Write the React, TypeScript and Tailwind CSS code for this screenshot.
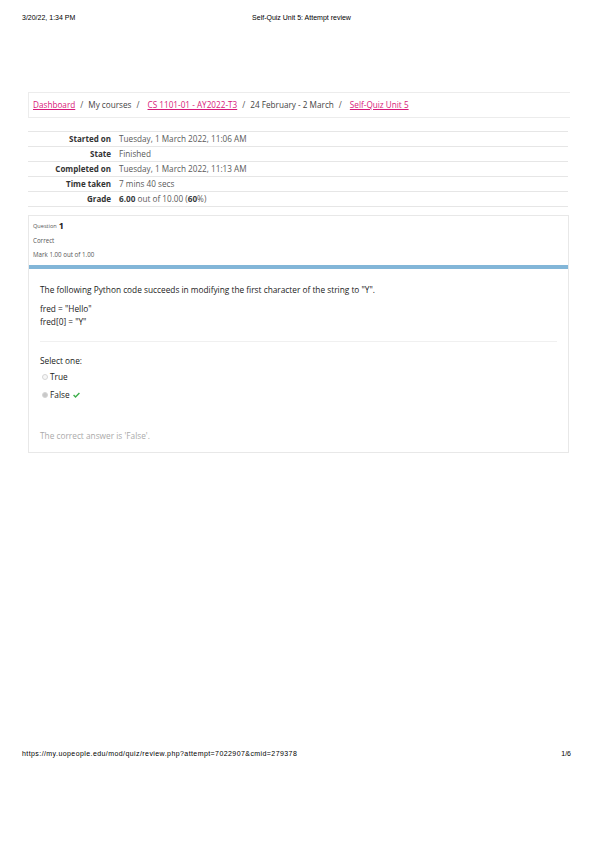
const linkClass = 'text-[#d8197a] underline underline-offset-1';

const summary: [string, React.ReactNode][] = [
  ['Started on', 'Tuesday, 1 March 2022, 11:06 AM'],
  ['State', 'Finished'],
  ['Completed on', 'Tuesday, 1 March 2022, 11:13 AM'],
  ['Time taken', '7 mins 40 secs'],
  [
    'Grade',
    <>
      <b className="font-bold text-[#373a3c]">6.00</b> out of 10.00 (<b className="font-bold text-[#373a3c]">60</b>%)
    </>,
  ],
];

function Sep() {
  return <span className="mx-[5px] text-[#555]">/</span>;
}

function Radio({ checked }: { checked?: boolean }) {
  return (
    <span
      className={`mr-[2px] inline-block h-[6px] w-[6px] rounded-full border border-[#d5d5d5] ${
        checked ? 'bg-[#c8c8c8]' : 'bg-[#f7f7f7]'
      }`}
    />
  );
}

export default function App() {
  return (
    <div className="flex h-[842px] w-[595px] flex-col bg-white font-['Open_Sans',sans-serif] text-[#373a3c]">
      <header className="grid h-[37px] grid-cols-[1fr_auto_1fr] items-center px-[22px] font-['Liberation_Sans',Arial,sans-serif] text-[7px] text-black">
        <span>3/20/22, 1:34 PM</span>
        <span className="pl-[8px]">Self-Quiz Unit 5: Attempt review</span>
        <span />
      </header>

      <main className="pl-[28px] pr-[25px]">
        <nav className="mt-[55px] flex h-[26px] items-center border border-r-0 border-[#ececec] pl-[4px] text-[8.2px] text-[#444]">
          <a className={linkClass}>Dashboard</a>
          <Sep />
          <span>My courses</span>
          <Sep />
          <a className={`${linkClass} ml-[3px]`}>CS 1101-01 - AY2022-T3</a>
          <Sep />
          <span>24 February - 2 March</span>
          <Sep />
          <a className={`${linkClass} ml-[3px]`}>Self-Quiz Unit 5</a>
        </nav>

        <table className="mt-[13px] w-[540px] border-collapse text-[8px]">
          <tbody>
            {summary.map(([label, value]) => (
              <tr key={label} className="h-[15px] border-y border-[#e6e6e6]">
                <th className="w-[83px] text-right font-bold text-[#333]">{label}</th>
                <td className="pl-[8px] text-[8.2px] text-[#5a5a5a]">{value}</td>
              </tr>
            ))}
          </tbody>
        </table>

        <section className="mt-[8px] mr-[1px] border border-[#e8e8e8]">
          <div className="border-b-4 border-[#82b6d8] px-[4px] pt-[3px] pb-[3px] text-[6.2px] text-[#555]">
            <div className="flex h-[14px] items-center text-[5.6px]">
              Question <span className="ml-[2px] text-[9px] font-bold text-[#222]">1</span>
            </div>
            <div className="mt-[1px] flex h-[14px] items-center">Correct</div>
            <div className="flex h-[14px] items-center">Mark 1.00 out of 1.00</div>
          </div>

          <div className="px-[11px] pt-[15px] pb-[10px] text-[8.3px] text-[#222]">
            <p className="leading-[12px]">
              The following Python code succeeds in modifying the first character of the string to "Y".
            </p>
            <p className="mt-[6px] leading-[13px]">
              fred = "Hello"
              <br />
              fred[0] = "Y"
            </p>
            <hr className="mt-[13px] border-[#f0f0f0]" />
            <p className="mt-[13px] leading-[12px]">Select one:</p>
            <div className="mt-[4px] flex h-[12px] items-center pl-[2px]">
              <Radio />
              True
            </div>
            <div className="mt-[6px] flex h-[12px] items-center pl-[2px]">
              <Radio checked />
              False
              <svg viewBox="0 0 12 10" className="ml-[3px] h-[6px] w-[7px]">
                <path d="M1 5.2 L4.3 8.4 L11 1.6" fill="none" stroke="#3cae4a" strokeWidth="2.4" />
              </svg>
            </div>
            <p className="mt-[29px] leading-[12px] text-[#aaa]">The correct answer is 'False'.</p>
          </div>
        </section>
      </main>

      <footer className="mt-auto mb-[82px] flex h-[12px] items-center justify-between px-[22px] font-['Liberation_Sans',Arial,sans-serif] text-[7px] text-black">
        <span className="tracking-[0.42px]">
          https://my.uopeople.edu/mod/quiz/review.php?attempt=7022907&amp;cmid=279378
        </span>
        <span className="pr-[2px]">1/6</span>
      </footer>
    </div>
  );
}
